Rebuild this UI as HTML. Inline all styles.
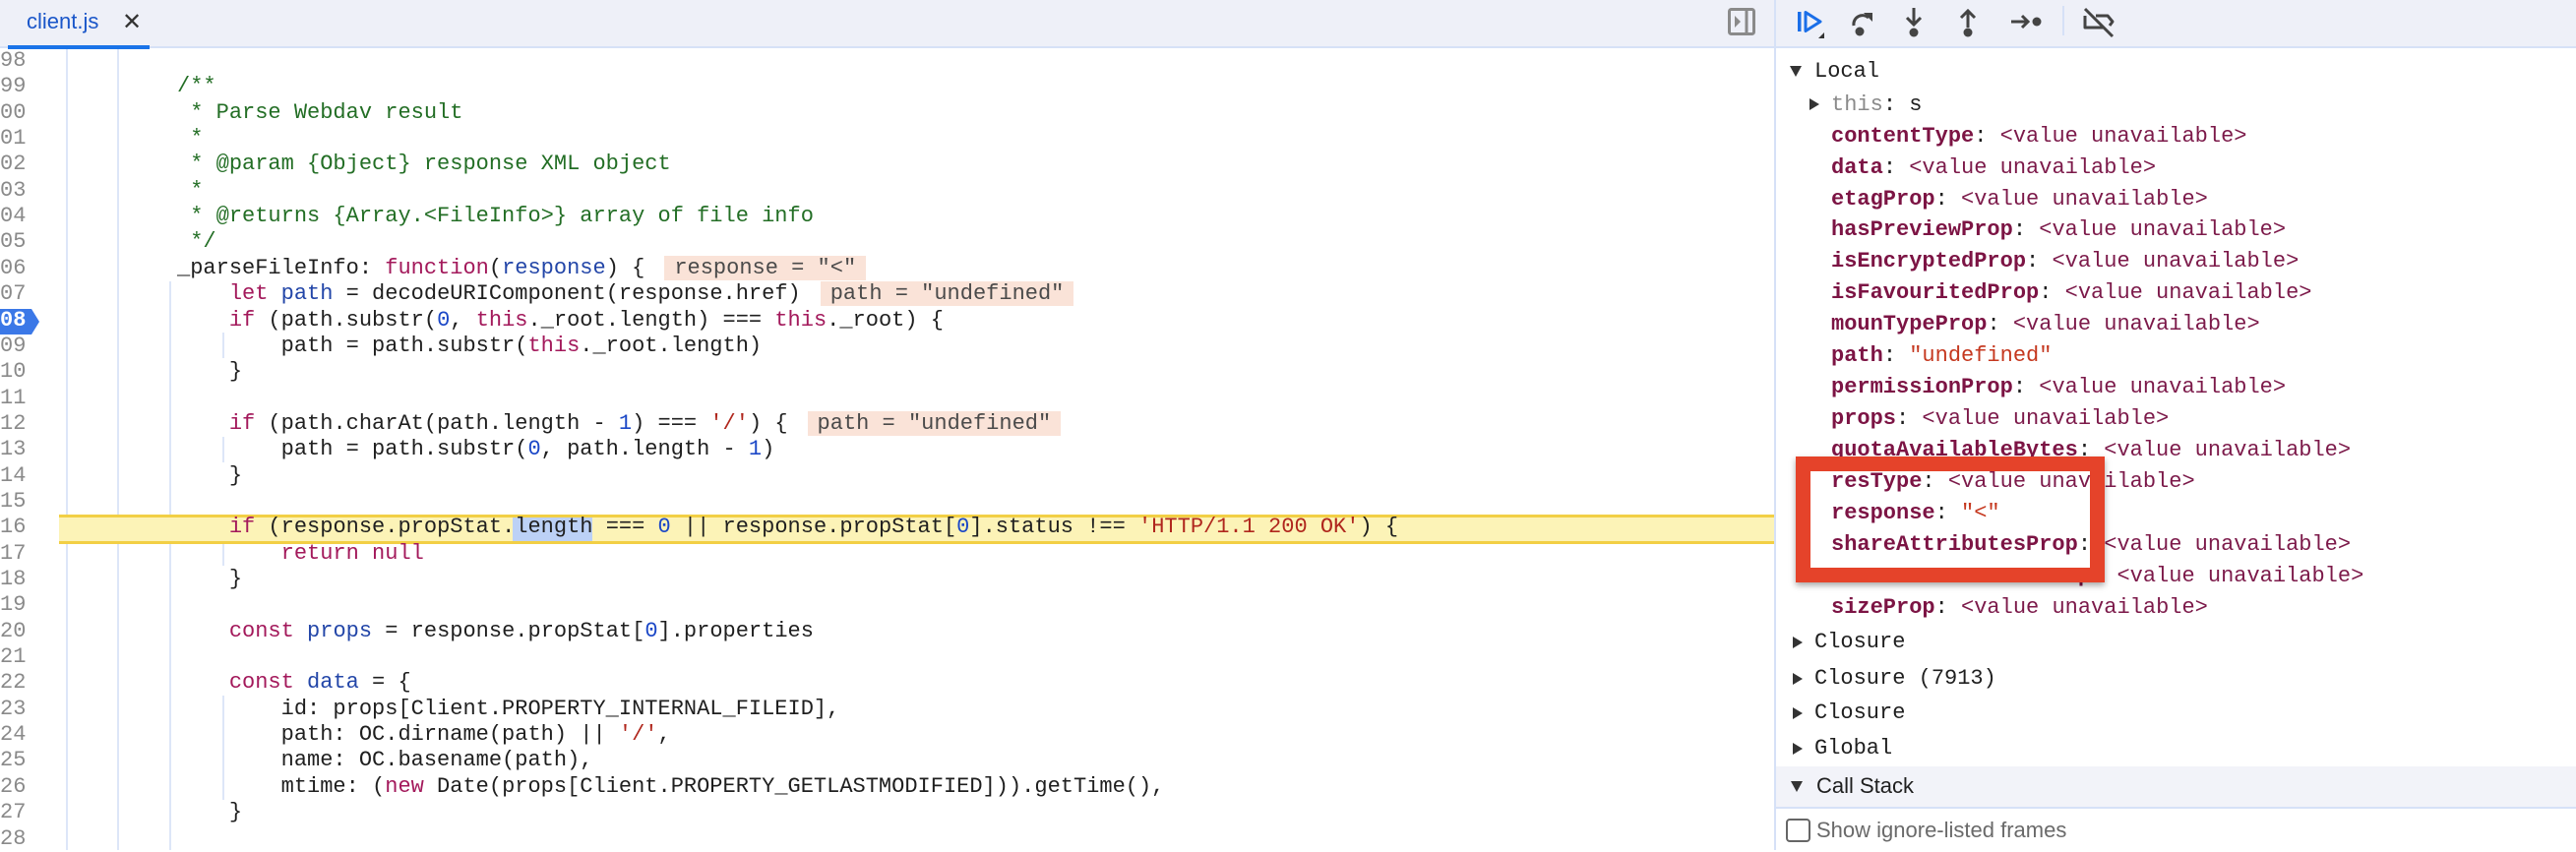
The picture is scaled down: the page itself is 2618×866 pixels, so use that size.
<!DOCTYPE html>
<html><head><meta charset="utf-8"><style>
*{margin:0;padding:0;box-sizing:border-box}
body{width:2618px;height:864px;overflow:hidden;background:#fff;position:relative;font-family:"Liberation Mono",monospace;}
.hdr{position:absolute;left:0;top:0;width:2618px;height:49px;background:#eef0f8;border-bottom:2px solid #d6e1f7}
.tab{position:absolute;left:27px;top:9px;font:22px "Liberation Sans",sans-serif;color:#1a56c9}
.tabx{position:absolute;left:124px;top:8px;font:24px "Liberation Sans",sans-serif;color:#333}
.uline{position:absolute;left:8px;top:46px;width:144px;height:4px;background:#1a73e8}
.ln{position:absolute;left:0;width:40px;height:26.35px;line-height:26.35px;font-size:22px;color:#8a8a8a;white-space:pre}
.cl{position:absolute;left:74.4px;height:26.35px;line-height:26.35px;font-size:22px;color:#1f1f1f;white-space:pre}
.g{position:absolute;width:2px;background:#dde6f8}
.c{color:#236e25}.k{color:#a3195b}.v{color:#2346a8}.n{color:#1c48c7}.s{color:#b0271d}
.pill{background:#fae3d8;color:#4a4a4a;padding:0 10px;margin-left:20px;display:inline-block;height:25px;line-height:25px}
.rp{position:absolute;left:1803px;top:0;width:815px;height:864px;border-left:2px solid #d6e1f7}
.row{position:absolute;left:1861px;font-size:22px;line-height:30px;height:30px;white-space:pre;color:#7c1a4a}
.row b{color:#7c1444}
.tri{position:absolute;width:0;height:0}
.sec{position:absolute;left:1844px;font-size:22px;line-height:30px;color:#1f1f1f;white-space:pre}
</style></head><body>
<div class="hdr"></div>
<div class="tab">client.js</div>
<div class="tabx">✕</div>
<div class="uline"></div>

<!-- gutter guides -->
<div class="g" style="left:67px;top:50px;height:814px"></div>
<div class="g" style="left:119px;top:50px;height:814px"></div>
<div class="g" style="left:172px;top:286px;height:578px"></div>
<div class="g" style="left:226px;top:338px;height:26px"></div>
<div class="g" style="left:226px;top:444px;height:26px"></div>
<div class="g" style="left:226px;top:549px;height:26px"></div>
<div class="g" style="left:226px;top:707px;height:106px"></div>

<!-- yellow line -->
<div style="position:absolute;left:60px;top:523px;width:1743px;height:30px;background:#fcf3b7;border-top:3px solid #f2cf45;border-bottom:3px solid #f2cf45"></div>
<div style="position:absolute;left:521px;top:526px;width:81px;height:24px;background:#bcd1f6"></div>

<!-- line numbers -->
<div class="ln" style="top:49px">98</div>
<div class="ln" style="top:75.35px">99</div>
<div class="ln" style="top:101.7px">00</div>
<div class="ln" style="top:128.05px">01</div>
<div class="ln" style="top:154.4px">02</div>
<div class="ln" style="top:180.75px">03</div>
<div class="ln" style="top:207.1px">04</div>
<div class="ln" style="top:233.45px">05</div>
<div class="ln" style="top:259.8px">06</div>
<div class="ln" style="top:286.15px">07</div>
<svg style="position:absolute;left:0;top:314px" width="41" height="26"><path d="M0 0H32L40 13L32 26H0Z" fill="#3b78e7"/></svg>
<div class="ln" style="top:312.5px;color:#fff;font-weight:bold">08</div>
<div class="ln" style="top:338.85px">09</div>
<div class="ln" style="top:365.2px">10</div>
<div class="ln" style="top:391.55px">11</div>
<div class="ln" style="top:417.9px">12</div>
<div class="ln" style="top:444.25px">13</div>
<div class="ln" style="top:470.6px">14</div>
<div class="ln" style="top:496.95px">15</div>
<div class="ln" style="top:523.3px">16</div>
<div class="ln" style="top:549.65px">17</div>
<div class="ln" style="top:576px">18</div>
<div class="ln" style="top:602.35px">19</div>
<div class="ln" style="top:628.7px">20</div>
<div class="ln" style="top:655.05px">21</div>
<div class="ln" style="top:681.4px">22</div>
<div class="ln" style="top:707.75px">23</div>
<div class="ln" style="top:734.1px">24</div>
<div class="ln" style="top:760.45px">25</div>
<div class="ln" style="top:786.8px">26</div>
<div class="ln" style="top:813.15px">27</div>
<div class="ln" style="top:839.5px">28</div>

<!-- code -->
<div class="cl c" style="top:75.35px">        /**</div>
<div class="cl c" style="top:101.7px">         * Parse Webdav result</div>
<div class="cl c" style="top:128.05px">         *</div>
<div class="cl c" style="top:154.4px">         * @param {Object} response XML object</div>
<div class="cl c" style="top:180.75px">         *</div>
<div class="cl c" style="top:207.1px">         * @returns {Array.&lt;FileInfo&gt;} array of file info</div>
<div class="cl c" style="top:233.45px">         */</div>
<div class="cl" style="top:259.8px">        _parseFileInfo: <span class="k">function</span>(<span class="v">response</span>) {<span class="pill">response = "&lt;"</span></div>
<div class="cl" style="top:286.15px">            <span class="k">let</span> <span class="v">path</span> = decodeURIComponent(response.href)<span class="pill">path = "undefined"</span></div>
<div class="cl" style="top:312.5px">            <span class="k">if</span> (path.substr(<span class="n">0</span>, <span class="k">this</span>._root.length) === <span class="k">this</span>._root) {</div>
<div class="cl" style="top:338.85px">                path = path.substr(<span class="k">this</span>._root.length)</div>
<div class="cl" style="top:365.2px">            }</div>
<div class="cl" style="top:417.9px">            <span class="k">if</span> (path.charAt(path.length - <span class="n">1</span>) === <span class="s">'/'</span>) {<span class="pill">path = "undefined"</span></div>
<div class="cl" style="top:444.25px">                path = path.substr(<span class="n">0</span>, path.length - <span class="n">1</span>)</div>
<div class="cl" style="top:470.6px">            }</div>
<div class="cl" style="top:523.3px">            <span class="k">if</span> (response.propStat.length === <span class="n">0</span> || response.propStat[<span class="n">0</span>].status !== <span class="s">'HTTP/1.1 200 OK'</span>) {</div>
<div class="cl" style="top:549.65px">                <span class="k">return null</span></div>
<div class="cl" style="top:576px">            }</div>
<div class="cl" style="top:628.7px">            <span class="k">const</span> <span class="v">props</span> = response.propStat[<span class="n">0</span>].properties</div>
<div class="cl" style="top:681.4px">            <span class="k">const</span> <span class="v">data</span> = {</div>
<div class="cl" style="top:707.75px">                id: props[Client.PROPERTY_INTERNAL_FILEID],</div>
<div class="cl" style="top:734.1px">                path: OC.dirname(path) || <span class="s">'/'</span>,</div>
<div class="cl" style="top:760.45px">                name: OC.basename(path),</div>
<div class="cl" style="top:786.8px">                mtime: (<span class="k">new</span> Date(props[Client.PROPERTY_GETLASTMODIFIED])).getTime(),</div>
<div class="cl" style="top:813.15px">            }</div>

<!-- right pane -->
<div class="rp"></div>
<svg style="position:absolute;left:1756px;top:8px" width="28" height="28"><rect x="1.5" y="1.5" width="25" height="25" rx="2" fill="none" stroke="#8a8a8a" stroke-width="3"/><line x1="19" y1="2" x2="19" y2="26" stroke="#8a8a8a" stroke-width="3"/><path d="M7 8L13 14L7 20Z" fill="#8a8a8a"/></svg>
<svg style="position:absolute;left:1824px;top:6px" width="300" height="36" viewBox="0 0 300 36">
 <rect x="3" y="6" width="3.5" height="20" fill="#1a6ee8"/>
 <path d="M11 6.5L26 16L11 25.5Z" fill="none" stroke="#1a6ee8" stroke-width="3" stroke-linejoin="round"/>
 <path d="M24 33L30 27V33Z" fill="#333"/>
 <path d="M60 20A9 9 0 0 1 75 12" fill="none" stroke="#444" stroke-width="3"/><path d="M70 7H79V16Z" fill="#444"/><circle cx="66" cy="26" r="4.5" fill="#444"/>
 <line x1="121" y1="2" x2="121" y2="18" stroke="#444" stroke-width="3"/><path d="M114 12L121 19L128 12" fill="none" stroke="#444" stroke-width="3"/><circle cx="121" cy="27" r="4.5" fill="#444"/>
 <line x1="176" y1="6" x2="176" y2="22" stroke="#444" stroke-width="3"/><path d="M169 12L176 5L183 12" fill="none" stroke="#444" stroke-width="3"/><circle cx="176" cy="27" r="4.5" fill="#444"/>
 <line x1="220" y1="16" x2="237" y2="16" stroke="#444" stroke-width="3"/><path d="M231 10L237 16L231 22" fill="none" stroke="#444" stroke-width="3"/><circle cx="246" cy="16" r="4.5" fill="#444"/>
 <line x1="273" y1="0" x2="273" y2="30" stroke="#d6e1f7" stroke-width="2"/>
</svg>
<svg style="position:absolute;left:2116px;top:6px" width="36" height="34"><path d="M3 10V22H22M14 10H26L31 16L28 20" fill="none" stroke="#444" stroke-width="3" stroke-linejoin="round"/><line x1="3" y1="3" x2="31" y2="31" stroke="#444" stroke-width="3"/></svg>

<div class="tri" style="left:1819px;top:67px;border-left:6px solid transparent;border-right:6px solid transparent;border-top:11px solid #333"></div>
<div class="sec" style="top:58px">Local</div>
<div class="tri" style="left:1839px;top:100px;border-top:6px solid transparent;border-bottom:6px solid transparent;border-left:10px solid #333"></div>
<div class="row" style="top:92px;color:#1f1f1f"><span style="color:#8a8a8a">this</span>: s</div>
<div class="row" style="top:124px"><b>contentType</b><span style="color:#1f1f1f">:</span> &lt;value unavailable&gt;</div>
<div class="row" style="top:156px"><b>data</b><span style="color:#1f1f1f">:</span> &lt;value unavailable&gt;</div>
<div class="row" style="top:188px"><b>etagProp</b><span style="color:#1f1f1f">:</span> &lt;value unavailable&gt;</div>
<div class="row" style="top:219px"><b>hasPreviewProp</b><span style="color:#1f1f1f">:</span> &lt;value unavailable&gt;</div>
<div class="row" style="top:251px"><b>isEncryptedProp</b><span style="color:#1f1f1f">:</span> &lt;value unavailable&gt;</div>
<div class="row" style="top:283px"><b>isFavouritedProp</b><span style="color:#1f1f1f">:</span> &lt;value unavailable&gt;</div>
<div class="row" style="top:315px"><b>mounTypeProp</b><span style="color:#1f1f1f">:</span> &lt;value unavailable&gt;</div>
<div class="row" style="top:347px"><b>path</b><span style="color:#1f1f1f">:</span> <span style="color:#c5381f">"undefined"</span></div>
<div class="row" style="top:379px"><b>permissionProp</b><span style="color:#1f1f1f">:</span> &lt;value unavailable&gt;</div>
<div class="row" style="top:411px"><b>props</b><span style="color:#1f1f1f">:</span> &lt;value unavailable&gt;</div>
<div class="row" style="top:443px"><b>quotaAvailableBytes</b><span style="color:#1f1f1f">:</span> &lt;value unavailable&gt;</div>
<div class="row" style="top:475px"><b>resType</b><span style="color:#1f1f1f">:</span> &lt;value unavailable&gt;</div>
<div class="row" style="top:507px"><b>response</b><span style="color:#1f1f1f">:</span> <span style="color:#c5381f">"&lt;"</span></div>
<div class="row" style="top:539px"><b>shareAttributesProp</b><span style="color:#1f1f1f">:</span> &lt;value unavailable&gt;</div>
<div class="row" style="top:571px"><b>sharePermissionsProp</b><span style="color:#1f1f1f">:</span> &lt;value unavailable&gt;</div>
<div class="row" style="top:603px"><b>sizeProp</b><span style="color:#1f1f1f">:</span> &lt;value unavailable&gt;</div>
<div style="position:absolute;left:1825px;top:464px;width:314px;height:128px;border:15px solid #e5432a;box-shadow:0 3px 6px rgba(0,0,0,.35)"></div>
<div style="position:absolute;left:1840px;top:479px;width:284px;height:98px;background:#fff"></div>
<div class="row" style="top:475px"><b>resType</b><span style="color:#1f1f1f">:</span> &lt;value unav</div>
<div class="row" style="top:507px"><b>response</b><span style="color:#1f1f1f">:</span> <span style="color:#c5381f">"&lt;"</span></div>
<div class="row" style="top:539px"><b>shareAttributesProp</b><span style="color:#1f1f1f">:</span></div>

<div class="tri" style="left:1822px;top:647px;border-top:6px solid transparent;border-bottom:6px solid transparent;border-left:10px solid #333"></div>
<div class="sec" style="top:638px">Closure</div>
<div class="tri" style="left:1822px;top:684px;border-top:6px solid transparent;border-bottom:6px solid transparent;border-left:10px solid #333"></div>
<div class="sec" style="top:675px">Closure (7913)</div>
<div class="tri" style="left:1822px;top:719px;border-top:6px solid transparent;border-bottom:6px solid transparent;border-left:10px solid #333"></div>
<div class="sec" style="top:710px">Closure</div>
<div class="tri" style="left:1822px;top:755px;border-top:6px solid transparent;border-bottom:6px solid transparent;border-left:10px solid #333"></div>
<div class="sec" style="top:746px">Global</div>

<div style="position:absolute;left:1805px;top:779px;width:813px;height:43px;background:#f2f3f9;border-bottom:2px solid #d6e1f7"></div>
<div class="tri" style="left:1820px;top:794px;border-left:6px solid transparent;border-right:6px solid transparent;border-top:11px solid #333"></div>
<div style="position:absolute;left:1846px;top:786px;font:22px 'Liberation Sans',sans-serif;color:#1f1f1f">Call Stack</div>
<div style="position:absolute;left:1815px;top:832px;width:25px;height:24px;border:2px solid #666;border-radius:4px;background:#fff"></div>
<div style="position:absolute;left:1846px;top:831px;font:22px 'Liberation Sans',sans-serif;color:#6a6a6a">Show ignore-listed frames</div>
</body></html>
